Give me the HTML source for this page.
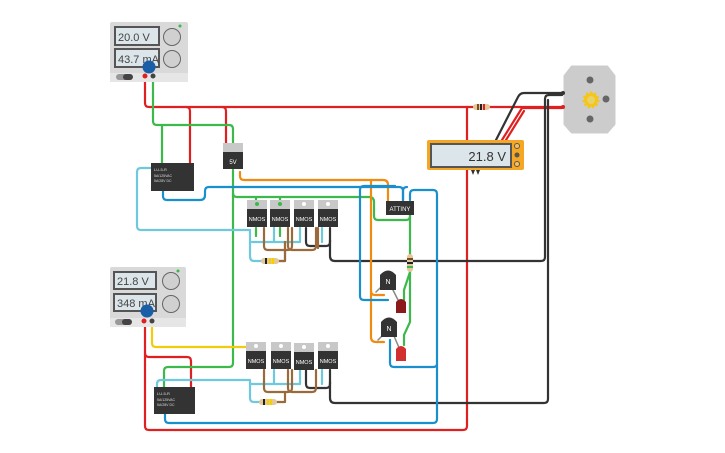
<!DOCTYPE html>
<html><head><meta charset="utf-8"><style>
html,body{margin:0;padding:0;background:#fff;}
svg{display:block;font-family:"Liberation Sans",sans-serif;}
</style></head><body>
<svg width="725" height="453" viewBox="0 0 725 453" xmlns="http://www.w3.org/2000/svg">
<g fill="none" stroke-linejoin="round" stroke-linecap="round" stroke-width="2.2">
<path d="M145 76 V103 Q145 107 149 107 H467 V426 Q467 430 463 430 H149 Q145 430 145 426 V320" stroke="#e02020"/>
<path d="M467 107 H562" stroke="#e02020"/>
<path d="M186 107 Q190 107 190 111 V165" stroke="#e02020"/>
<path d="M222 107 Q226 107 226 111 V145" stroke="#e02020"/>
<path d="M145 353 Q145 357 149 357 H187 Q191 357 191 361 V387" stroke="#e02020"/>
<path d="M502 140 L522 108 H562" stroke="#e02020"/>
<path d="M506 140 L524 111" stroke="#e02020"/>
<path d="M496 140 L518 97 Q520 93 524 93 H562" stroke="#333"/>
<path d="M330 240 V256 Q330 261 335 261 H541 Q545 261 545 257 V99 Q545 95 549 95 H562" stroke="#333"/>
<path d="M330 382 V398 Q330 403 335 403 H544 Q548 403 548 399 V100" stroke="#333"/>
<path d="M306 228 V242 Q306 246 310 246 H326 Q330 246 330 242 V228" stroke="#333"/>
<path d="M306 370 V384 Q306 388 310 388 H326 Q330 388 330 384 V370" stroke="#333"/>
<path d="M153 76 V121 Q153 125 157 125 H229 Q233 125 233 129 V145" stroke="#3cb94a"/>
<path d="M162 125 V165" stroke="#3cb94a"/>
<path d="M233 170 V363 Q233 367 229 367 H168 Q164 367 164 371 V387" stroke="#3cb94a"/>
<path d="M233 193 Q233 197 237 197 H369 Q374 197 374 202 V216 Q374 220 378 220 H406 Q410 220 410 216 V215" stroke="#3cb94a"/>
<path d="M256 197 V205 M280 197 V205" stroke="#3cb94a"/>
<path d="M410 215 V255 M410 272 L404 290 V300 M410 272 V322 L404 335 V345" stroke="#3cb94a"/>
<path d="M256 228 V236 M280 228 V236" stroke="#3cb94a"/>
<path d="M240 172 V176 Q240 180 244 180 H383 Q388 180 388 185 V201" stroke="#f08a10"/>
<path d="M371 180 V337 Q371 342 376 342 H384 M371 291 Q371 295 375 295 H384" stroke="#f08a10"/>
<path d="M163 191 V196 Q163 200 167 200 H200 Q205 200 205 195 V191 Q205 187 209 187 H399 Q403 187 403 191 V201" stroke="#1a8fce"/>
<path d="M403 200 V191 Q403 187 407 187 M360 190 Q360 186 364 186 H395 M360 190 V296 Q360 300 364 300 H388" stroke="#1a8fce"/>
<path d="M410 200 V194 Q410 190 414 190 H433 Q437 190 437 194 V419 Q437 423 433 423 H169 Q165 423 165 419 V414" stroke="#1a8fce"/>
<path d="M437 364 Q437 367 433 367 H394 Q390 367 390 363 V340" stroke="#1a8fce"/>
<path d="M151 168 H141 Q137 168 137 172 V226 Q137 230 141 230 H250 V256 Q250 261 254 261 H262" stroke="#6fc8dc"/>
<path d="M252 242 H300 V228 M274 242 V228 M322 242 V228 M278 261 H285 V242" stroke="#6fc8dc"/>
<path d="M157 387 V384 Q157 380 161 380 H250 V398 Q250 402 254 402 H260" stroke="#6fc8dc"/>
<path d="M250 384 H300 V370 M274 384 V370 M322 384 V370" stroke="#6fc8dc"/>
<path d="M152 320 V343 Q152 347 156 347 H256 V352" stroke="#f2cc0c"/>
<path d="M264 228 V246 Q264 250 268 250 H288 Q292 250 292 246 V228 M288 228 V246 Q288 250 292 250 H312 Q316 250 316 246 V228 M318 228 V248 M285 242 V261 H278" stroke="#9a6a3a"/>
<path d="M264 370 V388 Q264 392 268 392 H288 Q292 392 292 388 V370 M288 370 V388 Q288 392 292 392 H312 Q316 392 316 388 V370 M285 392 V402 H276" stroke="#9a6a3a"/>
<path d="M380 288 L376 292 M392 288 L398 300 M382 336 L378 340 M394 336 L400 350" stroke="#888" stroke-width="1.5"/>
</g>
<g>
<rect x="261" y="258" width="18" height="6" rx="3" fill="#e4c89a"/>
<rect x="265" y="258" width="2" height="6" fill="#222"/><rect x="269" y="258" width="2" height="6" fill="#f5d000"/><rect x="272" y="258" width="2" height="6" fill="#f5d000"/>
<rect x="259" y="399" width="18" height="6" rx="3" fill="#e4c89a"/>
<rect x="263" y="399" width="2" height="6" fill="#222"/><rect x="267" y="399" width="2" height="6" fill="#f5d000"/><rect x="270" y="399" width="2" height="6" fill="#f5d000"/>
<rect x="473" y="104" width="17" height="6" rx="3" fill="#e4c89a"/>
<rect x="477" y="104" width="2" height="6" fill="#7a4a20"/><rect x="480" y="104" width="2" height="6" fill="#222"/><rect x="483" y="104" width="2" height="6" fill="#e02020"/>
<rect x="407" y="254" width="6" height="18" rx="3" fill="#e4c89a"/>
<rect x="407" y="258" width="6" height="2" fill="#7a4a20"/><rect x="407" y="262" width="6" height="2" fill="#222"/><rect x="407" y="266" width="6" height="2" fill="#3cb94a"/>
</g>
<g>
<rect x="110" y="22" width="78" height="60" rx="2" fill="#d9d9d9"/>
<rect x="110" y="73" width="78" height="9" fill="#e6e6e6"/>
<rect x="114" y="26" width="46" height="20" fill="#555"/><rect x="116" y="28" width="42" height="16" fill="#dbe5ea"/>
<text x="118" y="41" font-size="11" fill="#444">20.0 V</text>
<rect x="114" y="48" width="46" height="20" fill="#555"/><rect x="116" y="50" width="42" height="16" fill="#dbe5ea"/>
<text x="118" y="63" font-size="11" fill="#444">43.7 mA</text>
<circle cx="172" cy="37" r="8.5" fill="#d0d0d0" stroke="#666"/><circle cx="172" cy="59" r="8.5" fill="#d0d0d0" stroke="#666"/>
<circle cx="180" cy="26" r="1.5" fill="#3cb94a"/>
<rect x="116" y="74" width="16" height="6" rx="3" fill="#999"/><rect x="123" y="74" width="10" height="6" rx="3" fill="#444"/>
<circle cx="145" cy="76" r="2.5" fill="#e02020"/><circle cx="153" cy="76" r="2.5" fill="#444"/>
<circle cx="149" cy="67" r="6.5" fill="#1a5ea8"/>
</g>
<g>
<rect x="110" y="267" width="76" height="60" rx="2" fill="#d9d9d9"/>
<rect x="110" y="318" width="76" height="9" fill="#e6e6e6"/>
<rect x="113" y="271" width="44" height="19" fill="#555"/><rect x="115" y="273" width="40" height="15" fill="#dbe5ea"/>
<text x="117" y="285" font-size="11" fill="#444">21.8 V</text>
<rect x="113" y="293" width="44" height="19" fill="#555"/><rect x="115" y="295" width="40" height="15" fill="#dbe5ea"/>
<text x="117" y="307" font-size="11" fill="#444">348 mA</text>
<circle cx="171" cy="281" r="8.5" fill="#d0d0d0" stroke="#666"/><circle cx="171" cy="304" r="8.5" fill="#d0d0d0" stroke="#666"/>
<circle cx="178" cy="271" r="1.5" fill="#3cb94a"/>
<rect x="115" y="319" width="16" height="6" rx="3" fill="#999"/><rect x="122" y="319" width="10" height="6" rx="3" fill="#444"/>
<circle cx="144" cy="321" r="2.5" fill="#e02020"/><circle cx="152" cy="321" r="2.5" fill="#444"/>
<circle cx="147" cy="311" r="6.5" fill="#1a5ea8"/>
</g>
<rect x="151" y="163" width="43" height="28" fill="#333"/>
<text x="154" y="171" font-size="4" fill="#ddd">LU-5-R</text>
<text x="154" y="177" font-size="3.5" fill="#ddd">5A/125VAC</text><text x="154" y="182" font-size="3.5" fill="#ddd">5A/28V DC</text>
<rect x="154" y="387" width="41" height="27" fill="#333"/>
<text x="157" y="395" font-size="4" fill="#ddd">LU-5-R</text>
<text x="157" y="401" font-size="3.5" fill="#ddd">5A/125VAC</text><text x="157" y="406" font-size="3.5" fill="#ddd">5A/28V DC</text>
<rect x="223" y="143" width="20" height="10" fill="#c8c8c8"/><rect x="223" y="152" width="20" height="17" fill="#333"/>
<text x="233" y="164" font-size="6" fill="#fff" text-anchor="middle">5V</text>
<g font-size="5.5" fill="#fff" text-anchor="middle">
<g transform="translate(247,200)"><rect width="20" height="9" fill="#c8c8c8"/><circle cx="10" cy="4" r="2" fill="#3cb94a"/><rect y="9" width="20" height="18" fill="#333"/><text x="10" y="21">NMOS</text></g>
<g transform="translate(270,200)"><rect width="20" height="9" fill="#c8c8c8"/><circle cx="10" cy="4" r="2" fill="#3cb94a"/><rect y="9" width="20" height="18" fill="#333"/><text x="10" y="21">NMOS</text></g>
<g transform="translate(294,200)"><rect width="20" height="9" fill="#c8c8c8"/><circle cx="10" cy="4" r="2" fill="#fff"/><rect y="9" width="20" height="18" fill="#333"/><text x="10" y="21">NMOS</text></g>
<g transform="translate(318,200)"><rect width="20" height="9" fill="#c8c8c8"/><circle cx="10" cy="4" r="2" fill="#fff"/><rect y="9" width="20" height="18" fill="#333"/><text x="10" y="21">NMOS</text></g>
<g transform="translate(246,342)"><rect width="20" height="9" fill="#c8c8c8"/><circle cx="10" cy="4" r="2" fill="#fff"/><rect y="9" width="20" height="18" fill="#333"/><text x="10" y="21">NMOS</text></g>
<g transform="translate(271,342)"><rect width="20" height="9" fill="#c8c8c8"/><circle cx="10" cy="4" r="2" fill="#fff"/><rect y="9" width="20" height="18" fill="#333"/><text x="10" y="21">NMOS</text></g>
<g transform="translate(294,343)"><rect width="20" height="9" fill="#c8c8c8"/><circle cx="10" cy="4" r="2" fill="#fff"/><rect y="9" width="20" height="18" fill="#333"/><text x="10" y="21">NMOS</text></g>
<g transform="translate(318,342)"><rect width="20" height="9" fill="#c8c8c8"/><circle cx="10" cy="4" r="2" fill="#fff"/><rect y="9" width="20" height="18" fill="#333"/><text x="10" y="21">NMOS</text></g>
</g>
<rect x="386" y="201" width="28" height="14" fill="#333"/>
<text x="400" y="211" font-size="6" fill="#fff" text-anchor="middle">ATTINY</text>
<path d="M380 275 Q388 266 396 275 V290 H380 Z" fill="#333"/>
<text x="388" y="284" font-size="7" fill="#fff" text-anchor="middle">N</text>
<path d="M381 322 Q389 313 397 322 V337 H381 Z" fill="#333"/>
<text x="389" y="331" font-size="7" fill="#fff" text-anchor="middle">N</text>
<path d="M396 302 Q401 296 406 302 V313 H396 Z" fill="#8b1a1a"/>
<path d="M396 349 Q401 343 406 349 V361 H396 Z" fill="#d03030"/>
<rect x="427" y="140" width="97" height="30" rx="2" fill="#f5a623"/>
<rect x="430" y="143" width="82" height="25" fill="#555"/><rect x="432" y="145" width="78" height="21" fill="#dbe5ea"/>
<text x="506" y="161" font-size="13" fill="#333" text-anchor="end">21.8 V</text>
<circle cx="517" cy="146" r="2.5" fill="#f5c060" stroke="#555"/><circle cx="517" cy="155" r="2.5" fill="#555"/><circle cx="517" cy="164" r="2.5" fill="#f5c060" stroke="#555"/>
<path d="M471 170 l2 5 l2 -5 M476 170 l2 5 l2 -5" fill="#333"/>
<path d="M572 67 H607 L614 76 V124 L607 132 H572 L565 124 V76 Z" fill="#ccc" stroke="#ccc" stroke-width="3" stroke-linejoin="round"/>
<circle cx="590" cy="80" r="3.5" fill="#666"/><circle cx="606" cy="99" r="3.5" fill="#666"/><circle cx="590" cy="119" r="3.5" fill="#666"/>
<circle cx="591" cy="100" r="7" fill="#f5c518" stroke="#f5c518" stroke-width="3" stroke-dasharray="2 2"/>
<circle cx="591" cy="100" r="4" fill="#e8d36a"/>
<circle cx="563" cy="93" r="2" fill="#333"/><circle cx="563" cy="107" r="2" fill="#e02020"/>
</svg>
</body></html>
